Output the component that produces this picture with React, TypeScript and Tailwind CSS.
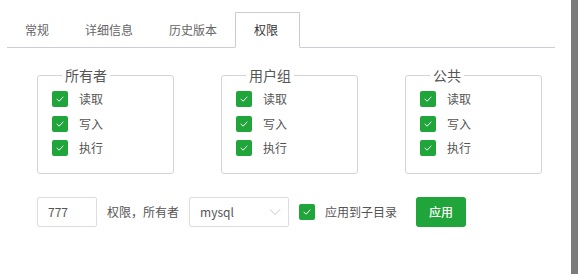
import React, { useState } from 'react';

const font = { fontFamily: '"Noto Sans CJK SC", "Noto Sans", sans-serif' };

const tabs = ['常规', '详细信息', '历史版本', '权限'];
const groups = ['所有者', '用户组', '公共'];
const perms = ['读取', '写入', '执行'];

const Check: React.FC<{ checked: boolean }> = ({ checked }) => (
  <span className={`w-4 h-4 rounded-[2px] flex items-center justify-center shrink-0 ${checked ? 'bg-[#20a53a]' : 'border border-[#ccc] bg-white'}`}>
    {checked && (
      <svg width="10" height="10" viewBox="0 0 10 10" fill="none">
        <path d="M2 5.2 L4.2 7.2 L8 3" stroke="#fff" strokeWidth="1" strokeLinecap="round" strokeLinejoin="round" />
      </svg>
    )}
  </span>
);

export default function App() {
  const [active] = useState(3);
  const [values, setValues] = useState<Record<string, boolean>>({});
  const [recursive, setRecursive] = useState(true);
  const isOn = (k: string) => values[k] !== false;

  return (
    <div className="flex w-[578px] h-[276px] bg-white overflow-hidden" style={font}>
      <div className="flex-1 min-w-0">
        <div className="flex ml-[7px] mr-[16px] mt-3 border-b border-[#cdcad9] h-[36px]">
          {tabs.map((t, i) => (
            <div
              key={t}
              className={`flex items-center text-[12px] -mb-px border ${i === active ? 'pl-[18px] pr-[21px] border-[#cdcad9] border-b-white bg-white text-[#333]' : 'px-[17px] border-transparent text-[#666]'}`}
            >
              {t}
            </div>
          ))}
        </div>

        <div className="pl-[37px]">
          <div className="flex gap-[47px] mt-[17px]">
            {groups.map(g => (
              <fieldset key={g} className="w-[137px] shrink-0 border border-[#d4d4d4] rounded-[3px] pl-[14px] pb-[12px] pt-[2px]">
                <legend className="ml-[10px] px-[3px] text-[14px] leading-[20px] text-[#555]">{g}</legend>
                {perms.map(p => {
                  const k = `${g}-${p}`;
                  return (
                    <label key={p} className="flex items-center h-[24.5px] gap-[11px] cursor-pointer" onClick={() => setValues(v => ({ ...v, [k]: !isOn(k) }))}>
                      <Check checked={isOn(k)} />
                      <span className="text-[12px] text-[#555]">{p}</span>
                    </label>
                  );
                })}
              </fieldset>
            ))}
          </div>

          <div className="flex items-center mt-[23px] h-[30px]">
            <input
              defaultValue="777"
              className="w-[60px] h-[30px] border border-[#ddd] rounded-[2px] px-[10px] text-[12px] text-[#555] outline-none"
            />
            <span className="ml-[10px] text-[12px] text-[#555]">权限，所有者</span>
            <div className="ml-[10px] w-[100px] h-[30px] border border-[#ddd] rounded-[2px] flex items-center justify-between pl-[10px] pr-[7px]">
              <span className="text-[12px] text-[#555]">mysql</span>
              <svg width="12" height="8" viewBox="0 0 12 8" fill="none">
                <path d="M1 1.5 L6 6.5 L11 1.5" stroke="#c6c6c6" strokeWidth="1" />
              </svg>
            </div>
            <label className="ml-[10px] flex items-center gap-[10px] cursor-pointer" onClick={() => setRecursive(r => !r)}>
              <Check checked={recursive} />
              <span className="text-[12px] text-[#555]">应用到子目录</span>
            </label>
            <button className="ml-[19px] w-[50px] h-[30px] rounded-[3px] bg-[#20a53a] text-white text-[12px] font-medium">应用</button>
          </div>
        </div>
      </div>
      <div className="w-[7px] h-[274px] bg-[#7b7b7b]" />
    </div>
  );
}
